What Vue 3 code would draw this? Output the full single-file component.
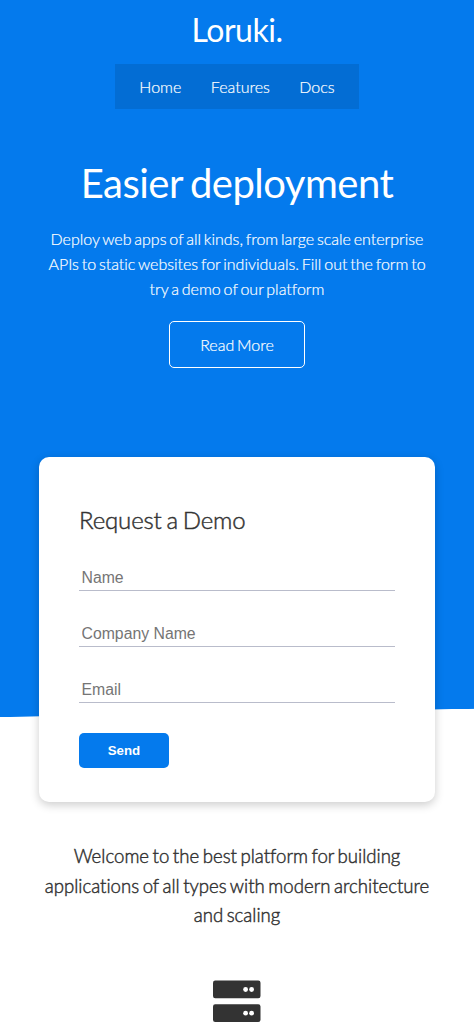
<script setup>
import {ref} from "vue";

const links = ["Home", "Features", "Docs"];
const fields = ref([
  {name: "name", type: "text", placeholder: "Name", value: ""},
  {name: "company", type: "text", placeholder: "Company Name", value: ""},
  {name: "email", type: "email", placeholder: "Email", value: ""}
]);
</script>
<template>
  <div class="page">
    <div class="top">
      <header>
        <h1 class="logo">Loruki.</h1>
        <nav>
          <ul>
            <li v-for="link in links" :key="link"><a href="#">{{ link }}</a></li>
          </ul>
        </nav>
      </header>
      <section class="showcase">
        <h1>Easier deployment</h1>
        <p>Deploy web apps of all kinds, from large scale enterprise APIs to static websites for individuals. Fill out the form to try a demo of our platform</p>
        <a class="btn btn-outline" href="#">Read More</a>
      </section>
      <div class="card">
        <h2>Request a Demo</h2>
        <form @submit.prevent>
          <input v-for="field in fields" :key="field.name" v-model="field.value"
                 :type="field.type" :name="field.name" :placeholder="field.placeholder">
          <button class="btn btn-primary" type="submit">Send</button>
        </form>
      </div>
    </div>
    <section class="stats">
      <h3>Welcome to the best platform for building applications of all types with modern architecture and scaling</h3>
      <svg class="server" viewBox="0 0 48 42" width="48" height="42">
        <rect x="0" y="0.5" width="47.5" height="17.7" rx="2.2"/>
        <rect x="0" y="24.3" width="47.5" height="17.7" rx="2.2"/>
        <g class="leds">
          <circle cx="32.6" cy="9.5" r="2.4"/>
          <circle cx="38.6" cy="9.5" r="2.4"/>
          <circle cx="32.6" cy="33.2" r="2.4"/>
          <circle cx="38.6" cy="33.2" r="2.4"/>
        </g>
      </svg>
    </section>
  </div>
</template>
<style>
body {
  margin: 0;
  background: #fff;
}
</style>
<style scoped>
.page {
  height: 1033px;
  overflow: hidden;
  font-family: Lato, sans-serif;
  font-weight: 300;
  font-size: 16px;
  font-variant-ligatures: none;
  word-spacing: -0.094em;
  color: #333;
  -webkit-text-stroke: 0.2px currentColor;
}

h1, h2, h3, p, ul {
  margin: 0;
  padding: 0;
}

h2, h3 {
  font-weight: 300;
  -webkit-text-stroke-width: 0.45px;
}

h1 {
  font-weight: 400;
  letter-spacing: -0.5px;
  word-spacing: -2px;
  -webkit-text-stroke-width: 0;
}

/* blue area ends in a slanted edge behind the card */
.top {
  height: 802px;
  background: linear-gradient(179deg, #047aed calc(50% + 311.5px), #fff calc(50% + 312.2px));
  color: #fff;
}

header {
  display: flex;
  flex-direction: column;
  align-items: center;
  height: 109px;
}

.logo {
  height: 64px;
  font-size: 32px;
  line-height: 60px;
}

nav {
  background: rgba(0, 0, 0, 0.1);
}

nav ul {
  display: flex;
  gap: 29.5px;
  padding: 0 24.5px;
  list-style: none;
  line-height: 45px;
}

nav a {
  color: #fff;
  text-decoration: none;
}

.showcase {
  display: flex;
  flex-direction: column;
  align-items: center;
  height: 348px;
  text-align: center;
}

.showcase h1 {
  margin-top: 49px;
  font-size: 40px;
  line-height: 50px;
}

.showcase p {
  width: 395px;
  margin-top: 18px;
  line-height: 25.2px;
}

.btn {
  box-sizing: border-box;
  border-radius: 5px;
  text-align: center;
}

.btn-outline {
  width: 136px;
  height: 47px;
  margin-top: 19px;
  border: 1px solid #fff;
  color: #fff;
  line-height: 46px;
  text-decoration: none;
}

.card {
  box-sizing: border-box;
  width: 396px;
  height: 345px;
  margin: 0 auto;
  padding: 44px 40px 0;
  border-radius: 10px;
  background: #fff;
  box-shadow: 0 3px 10px rgba(0, 0, 0, 0.2);
  color: #333;
}

.card h2 {
  font-size: 24px;
  letter-spacing: -0.15px;
  line-height: 38px;
}

form {
  display: flex;
  flex-direction: column;
  margin-top: 26px;
  -webkit-text-stroke-width: 0;
}

input {
  box-sizing: border-box;
  height: 26px;
  margin: 0 0 30px;
  padding: 3px 2.5px;
  border: 0;
  border-bottom: 1px solid #b9bccb;
  outline: none;
  font-family: "Liberation Sans", sans-serif;
  font-size: 15.8px;
}

input::placeholder {
  color: #757575;
}

.btn-primary {
  width: 90px;
  height: 35px;
  padding: 0;
  border: 0;
  background: #047aed;
  color: #fff;
  font-family: "Liberation Sans", sans-serif;
  font-size: 13.3px;
  font-weight: 700;
}

.stats {
  display: flex;
  flex-direction: column;
  align-items: center;
  padding: 40px 40px 0;
  text-align: center;
}

.stats h3 {
  font-size: 18.6px;
  line-height: 29.6px;
}

.server {
  margin-top: 49px;
  fill: #333;
}

.leds {
  fill: #fff;
}
</style>
